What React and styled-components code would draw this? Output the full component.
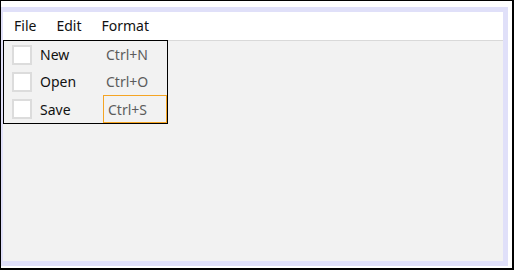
import React from "react";
import styled, { createGlobalStyle } from "styled-components";

const Global = createGlobalStyle`
  html, body { margin: 0; padding: 0; background: #ffffff; }
  body { font-family: "Noto Sans", "Open Sans", "Liberation Sans", sans-serif; }
`;

const Frame = styled.div`
  box-sizing: border-box;
  width: 514px;
  height: 270px;
  background: #ffffff;
  border-style: solid;
  border-color: #000000;
  border-width: 1px 2px 2px 1px;
  padding: 6px 4px 2px 0;
  display: flex;
`;

const Window = styled.div`
  flex: 1;
  position: relative;
  display: flex;
  flex-direction: column;
  border-style: solid;
  border-color: #e0e0f9;
  border-width: 5px 5px 5px 2px;
  background: #f2f2f2;
`;

const MenuBar = styled.div`
  height: 28px;
  background: #ffffff;
  border-bottom: 1px solid #d9d9d9;
  display: flex;
  align-items: center;
  padding-left: 1px;
`;

const MenuItem = styled.div`
  padding: 0 10px;
  font-size: 14px;
  color: #111111;
  line-height: 28px;
`;

const Content = styled.div`
  flex: 1;
  background: #f2f2f2;
`;

const Popup = styled.div`
  position: absolute;
  left: 0;
  top: 28px;
  box-sizing: border-box;
  width: 165px;
  height: 84px;
  border: 1px solid #000000;
  background: #f2f2f2;
  display: grid;
  grid-template-columns: 8px 20px 8px 63px 64px;
  grid-template-rows: 27px 27px 28px;
`;

const Check = styled.div`
  grid-column: 2;
  align-self: center;
  box-sizing: border-box;
  width: 20px;
  height: 20px;
  background: #ffffff;
  border: 2px solid #dcdcdc;
`;

const Label = styled.div`
  grid-column: 4;
  align-self: center;
  font-size: 14px;
  color: #111111;
`;

const Shortcut = styled.div`
  grid-column: 5;
  box-sizing: border-box;
  display: flex;
  align-items: center;
  padding-left: ${(p) => (p.$focused ? "4px" : "2px")};
  border: 1px solid ${(p) => (p.$focused ? "#f5a524" : "transparent")};
  font-size: 14px;
  color: #5c5c5c;
`;

const items = [
  { label: "New", key: "Ctrl+N" },
  { label: "Open", key: "Ctrl+O" },
  { label: "Save", key: "Ctrl+S", focused: true },
];

export default function App() {
  return (
    <>
      <Global />
      <Frame>
        <Window>
          <MenuBar>
            <MenuItem>File</MenuItem>
            <MenuItem>Edit</MenuItem>
            <MenuItem>Format</MenuItem>
          </MenuBar>
          <Content />
          <Popup>
            {items.map((it) => (
              <React.Fragment key={it.label}>
                <Check />
                <Label>{it.label}</Label>
                <Shortcut $focused={it.focused}>{it.key}</Shortcut>
              </React.Fragment>
            ))}
          </Popup>
        </Window>
      </Frame>
    </>
  );
}
